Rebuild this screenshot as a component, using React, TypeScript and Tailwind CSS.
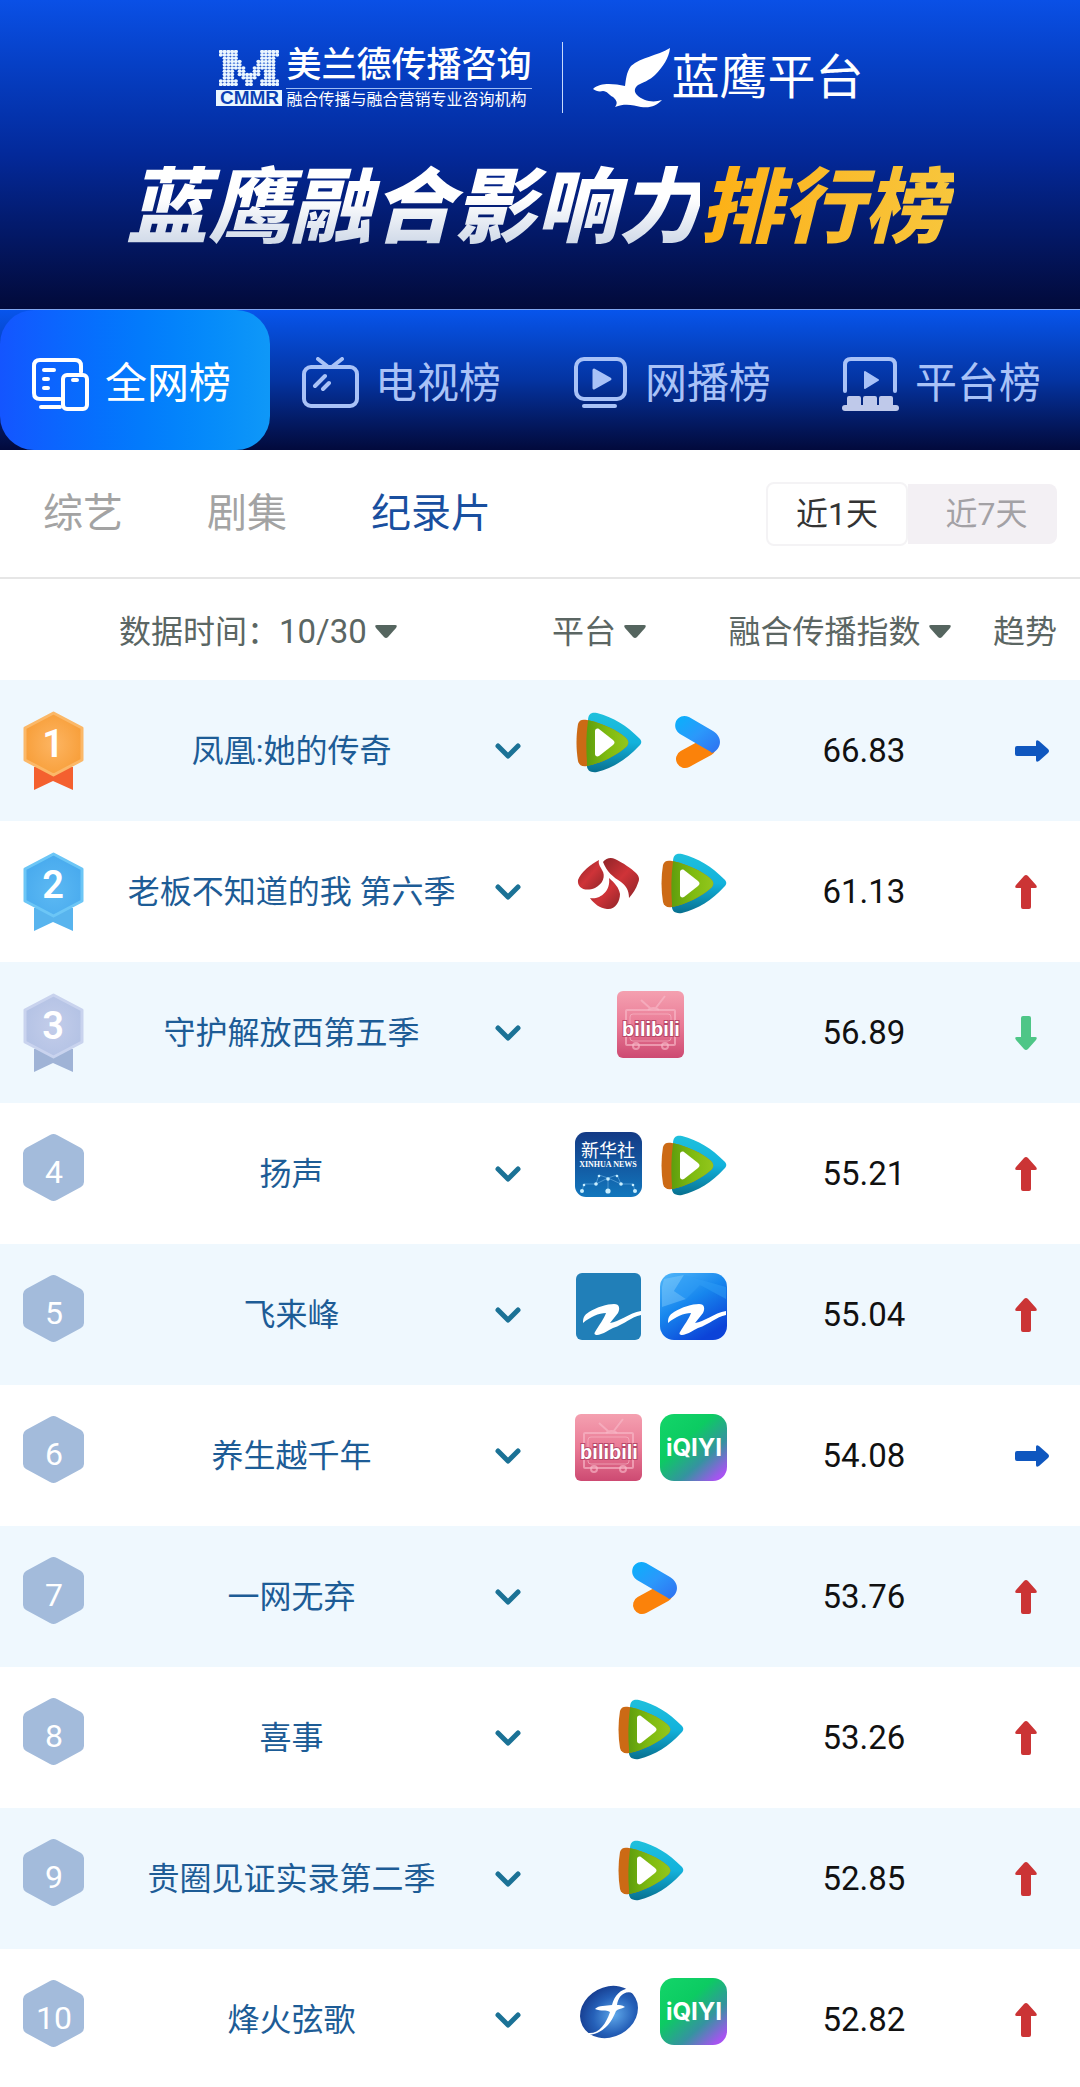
import { useState, type ReactNode } from "react";

type Trend = "up" | "down" | "flat";

interface Row {
  title: string;
  platforms: string[];
  score: string;
  trend: Trend;
}

const rows: Row[] = [
  { title: "凤凰:她的传奇", platforms: ["tencent", "youku"], score: "66.83", trend: "flat" },
  { title: "老板不知道的我 第六季", platforms: ["lychee", "tencent"], score: "61.13", trend: "up" },
  { title: "守护解放西第五季", platforms: ["bilibili"], score: "56.89", trend: "down" },
  { title: "扬声", platforms: ["xinhua", "tencent"], score: "55.21", trend: "up" },
  { title: "飞来峰", platforms: ["zjtv", "zlan"], score: "55.04", trend: "up" },
  { title: "养生越千年", platforms: ["bilibili", "iqiyi"], score: "54.08", trend: "flat" },
  { title: "一网无弃", platforms: ["youku"], score: "53.76", trend: "up" },
  { title: "喜事", platforms: ["tencent"], score: "53.26", trend: "up" },
  { title: "贵圈见证实录第二季", platforms: ["tencent"], score: "52.85", trend: "up" },
  { title: "烽火弦歌", platforms: ["straits", "iqiyi"], score: "52.82", trend: "up" },
];

const mDots = [
  "#####......#####",
  "#####......#####",
  ".####......####.",
  ".#####....#####.",
  ".#####....#####.",
  ".######..######.",
  ".###.##..##.###.",
  ".###.######.###.",
  ".###..####..###.",
  "#####..##..#####",
  "#####..##..#####",
];

// Shared gradients, referenced by id from every icon
function Gradients() {
  return (
    <svg width="0" height="0" className="absolute" aria-hidden="true">
      <defs>
        <linearGradient id="cyan" x1="0" y1="0" x2="0" y2="1">
          <stop offset="0" stopColor="#1fc0dc" />
          <stop offset="0.5" stopColor="#12b2dc" />
          <stop offset="1" stopColor="#08708f" />
        </linearGradient>
        <linearGradient id="green" x1="0" y1="0" x2="1" y2="0">
          <stop offset="0" stopColor="#4f8f0c" />
          <stop offset="0.6" stopColor="#7fbb10" />
          <stop offset="1" stopColor="#93c61c" />
        </linearGradient>
        <linearGradient id="ykBlue" x1="0" y1="0" x2="1" y2="1">
          <stop offset="0" stopColor="#08b2fb" />
          <stop offset="0.5" stopColor="#2b98fb" />
          <stop offset="1" stopColor="#2f6ff0" />
        </linearGradient>
        <linearGradient id="red" x1="0" y1="0" x2="1" y2="1">
          <stop offset="0" stopColor="#8e2428" />
          <stop offset="0.5" stopColor="#cf3338" />
          <stop offset="1" stopColor="#8f2529" />
        </linearGradient>
        <linearGradient id="pink" x1="0" y1="0" x2="0" y2="1">
          <stop offset="0" stopColor="#f4a0b0" />
          <stop offset="0.5" stopColor="#ea7b96" />
          <stop offset="1" stopColor="#cd4a72" />
        </linearGradient>
        <linearGradient id="navy" x1="0" y1="0" x2="0" y2="1">
          <stop offset="0" stopColor="#143a85" />
          <stop offset="1" stopColor="#1277bd" />
        </linearGradient>
        <linearGradient id="sky" x1="0" y1="0" x2="0.6" y2="1">
          <stop offset="0" stopColor="#52b8fa" />
          <stop offset="0.5" stopColor="#1787ee" />
          <stop offset="1" stopColor="#0c43d8" />
        </linearGradient>
        <linearGradient id="iq" x1="0.1" y1="0" x2="1" y2="1">
          <stop offset="0" stopColor="#12d468" />
          <stop offset="0.35" stopColor="#0ccb62" />
          <stop offset="0.65" stopColor="#3593a0" />
          <stop offset="0.9" stopColor="#a455ef" />
          <stop offset="1" stopColor="#b04dfa" />
        </linearGradient>
        <radialGradient id="globe" cx="0.55" cy="0.6" r="0.6">
          <stop offset="0" stopColor="#5fa8ea" />
          <stop offset="0.6" stopColor="#2560b8" />
          <stop offset="1" stopColor="#173f92" />
        </radialGradient>
        <radialGradient id="gold" cx="0.5" cy="0.5" r="0.6">
          <stop offset="0" stopColor="#fdb562" />
          <stop offset="1" stopColor="#f79c35" />
        </radialGradient>
        <radialGradient id="blue" cx="0.5" cy="0.6" r="0.6">
          <stop offset="0" stopColor="#5cb9f3" />
          <stop offset="1" stopColor="#48aaee" />
        </radialGradient>
        <radialGradient id="silver" cx="0.5" cy="0.5" r="0.6">
          <stop offset="0" stopColor="#c3cdea" />
          <stop offset="1" stopColor="#b2c1e4" />
        </radialGradient>
        <clipPath id="cyanShape">
          <path d="M13 12C13 5 16 3 22 4C38 8 52 17 64 29C67 32 67 34 64 37C52 50 38 59 22 63C15 64 11 61 12 54C11 40 11 26 13 12Z" />
        </clipPath>
      </defs>
    </svg>
  );
}

function Tencent() {
  return (
    <>
      <path fill="url(#cyan)" d="M13 12C13 5 16 3 22 4C38 8 52 17 64 29C67 32 67 34 64 37C52 50 38 59 22 63C15 64 11 61 12 54C14 40 14 26 13 12Z" />
      <path fill="#cc6a15" d="M3 15C4 11 7 10 12 11C27 14 42 21 51 29C54 32 54 35 51 38C42 46 27 54 12 57C7 58 4 56 3 52C1 40 1 27 3 15Z" />
      <path fill="url(#green)" clipPath="url(#cyanShape)" d="M3 15C4 11 7 10 12 11C27 14 42 21 51 29C54 32 54 35 51 38C42 46 27 54 12 57C7 58 4 56 3 52C1 40 1 27 3 15Z" />
      <path fill="#fff" d="M20 22C20 20 22 19 24 20L38 31C40 33 40 34 38 36L24 47C22 48 20 47 20 45Z" />
    </>
  );
}

function Youku() {
  return (
    <>
      <path stroke="#fb820a" strokeWidth="18" strokeLinecap="round" d="M25 50L47 38" />
      <path fill="url(#ykBlue)" d="M29 8L53 22C63 28 62 40 52 44C50 42 46 40 44 39L20 25C10 18 17 3 29 8Z" />
    </>
  );
}

function Lychee() {
  return (
    <g fill="url(#red)">
      <path d="M24 10C16 14 6 22 3 30C2 38 10 42 20 38C28 34 31 26 27 20C25 16 23 14 24 10Z" />
      <path d="M28 12C31 8 36 7 40 9C48 13 56 18 61 23C64 26 65 29 63 33C61 39 58 43 54 48C54 40 51 36 46 32C38 27 32 22 28 12Z" />
      <path d="M34 28C40 33 44 38 45 44C45 52 40 60 32 59C25 58 19 54 15 48C24 50 36 42 34 28Z" />
    </g>
  );
}

function Bilibili() {
  return (
    <>
      <rect width="67" height="67" rx="6" fill="url(#pink)" />
      <g fill="none" stroke="#f8b9c8" strokeOpacity="0.65" strokeWidth="2">
        <rect x="9" y="19" width="49" height="35" rx="1" />
        <rect x="13" y="23" width="41" height="27" rx="3" strokeWidth="1" />
        <path d="M24 9L34 18M48 5L38 18M31 19A7 5 0 0 1 42 19" />
        <circle cx="19" cy="55" r="3" />
        <circle cx="48" cy="55" r="3" />
      </g>
      <text x="34" y="45" textAnchor="middle" fontSize="20" fill="#fff" stroke="#b9486a" strokeWidth="2" paintOrder="stroke" className="font-['Liberation_Sans',sans-serif] font-bold">
        bilibili
      </text>
    </>
  );
}

function Xinhua() {
  return (
    <>
      <rect width="67" height="65" rx="11" fill="url(#navy)" />
      <text x="33" y="25" textAnchor="middle" fontSize="18" fill="#fff" className="font-['Noto_Sans_CJK_SC',sans-serif]">
        新华社
      </text>
      <text x="33" y="35" textAnchor="middle" fontSize="8" fill="#fff" className="font-['Liberation_Serif',serif] font-bold">
        XINHUA NEWS
      </text>
      <path stroke="#6fb2e4" strokeWidth="0.6" fill="none" d="M7 59L9 52L21 52L24 43L33 46L42 43L46 52L58 52L60 59M21 52L33 46V59M33 46L46 52" />
      <g fill="#c9efff">
        <circle cx="24" cy="44" r="1.3" />
        <circle cx="42" cy="44" r="1.3" />
        <circle cx="33" cy="47" r="1.8" />
        <circle cx="9" cy="53" r="1.3" />
        <circle cx="21" cy="52" r="1.8" />
        <circle cx="46" cy="52" r="1.8" />
        <circle cx="58" cy="53" r="1.3" />
        <circle cx="7" cy="59" r="2" />
        <circle cx="33" cy="59" r="2.6" />
        <circle cx="60" cy="59" r="2" />
      </g>
    </>
  );
}

const swoosh =
  "M8 50C8 45 9 42 14 39C22 34 32 31 39 31C45 31 45 36 43 40L35 50C44 49 54 40 66 38V42C56 44 50 51 38 55C33 57 30 60 26 61C22 63 18 62 20 59C24 52 29 46 31 40C24 40 15 44 8 50Z";

function Zjtv() {
  return (
    <>
      <rect x="1" width="65" height="67" rx="6" fill="#217fb8" />
      <path fill="#fff" d={swoosh} />
    </>
  );
}

function Zlan() {
  return (
    <>
      <rect width="67" height="67" rx="14" fill="url(#sky)" />
      <path fill="#8fd2fd" fillOpacity="0.4" d="M4 6L24 2L14 18L26 26L2 34V14Z" />
      <path fill="#2f9ef5" fillOpacity="0.5" d="M24 2L66 14V26L40 12L26 26L14 18Z" />
      <path fill="#fff" d={swoosh} />
    </>
  );
}

function Iqiyi() {
  return (
    <>
      <rect width="67" height="67" rx="14" fill="url(#iq)" />
      <text x="34" y="42" textAnchor="middle" fontSize="24" fill="#fff" className="font-['Inter',sans-serif] font-bold">
        iQIYI
      </text>
    </>
  );
}

function Straits() {
  return (
    <>
      <ellipse cx="34" cy="34" rx="30" ry="25" transform="rotate(-28 34 34)" fill="url(#globe)" />
      <path fill="#fff" d="M58 12C50 8 40 15 37 27C31 28 24 27 20 31C26 34 31 31 35 34C31 46 24 56 13 55C8 55 9 53 8 51C11 57 17 58 24 54C34 49 38 40 41 33C43 31 46 31 50 29C47 27 44 27 42 27C43 20 48 12 58 15C61 16 62 18 62 20C62 16 61 13 58 12Z" />
    </>
  );
}

const platformIcons: Record<string, { label: string; art: ReactNode }> = {
  tencent: { label: "腾讯视频", art: <Tencent /> },
  youku: { label: "优酷", art: <Youku /> },
  lychee: { label: "荔枝网", art: <Lychee /> },
  bilibili: { label: "哔哩哔哩", art: <Bilibili /> },
  xinhua: { label: "新华社", art: <Xinhua /> },
  zjtv: { label: "浙江卫视", art: <Zjtv /> },
  zlan: { label: "Z视介", art: <Zlan /> },
  iqiyi: { label: "爱奇艺", art: <Iqiyi /> },
  straits: { label: "海博TV", art: <Straits /> },
};

function Platform({ id }: { id: string }) {
  const { label, art } = platformIcons[id];
  return (
    <svg width="67" height="67" viewBox="0 0 67 67" fill="none" role="img" aria-label={label}>
      {art}
    </svg>
  );
}

const medals = [
  { fill: "url(#gold)", edge: "#fbb868", ribbon: "#f4602f" },
  { fill: "url(#blue)", edge: "#6cc6f6", ribbon: "#58b4ee" },
  { fill: "url(#silver)", edge: "#c9d3ee", ribbon: "#9fb3d6" },
];

function Rank({ rank }: { rank: number }) {
  const medal = medals[rank - 1];
  return (
    <svg width="61" height="80" viewBox="0 0 61 80" className="ml-[23px] block">
      {medal ? (
        <>
          <path fill={medal.ribbon} d="M11 56H50V79L30 70L11 79Z" />
          <path fill={medal.fill} stroke={medal.edge} strokeWidth="3" strokeLinejoin="round" d="M30.5 2L59 17V49L30.5 64L2 49V17Z" />
          <text x="30" y="46" textAnchor="middle" fontSize="38" fill="#fff" className="font-['Roboto',sans-serif] font-semibold">
            {rank}
          </text>
        </>
      ) : (
        <>
          <path fill="#a3bbdb" d="M27 1Q30.5 -1 34 1L58 14Q61 16 61 19V48Q61 51 58 53L34 66Q30.5 68 27 66L3 53Q0 51 0 48V19Q0 16 3 14Z" />
          <text x="31" y="49" textAnchor="middle" fontSize="32" fill="#fff" className="font-['Roboto',sans-serif]">
            {rank}
          </text>
        </>
      )}
    </svg>
  );
}

function TrendArrow({ trend }: { trend: Trend }) {
  if (trend === "flat") {
    return (
      <svg width="34" height="22" viewBox="0 0 34 22" role="img" aria-label="持平">
        <path fill="#0f57bf" d="M2 6H21V2Q21 -1 24 1L33 9Q35 11 33 13L24 21Q21 23 21 20V16H2Q0 16 0 14V8Q0 6 2 6Z" />
      </svg>
    );
  }
  const up = trend === "up";
  return (
    <svg width="22" height="34" viewBox="0 0 22 34" role="img" aria-label={up ? "上升" : "下降"} className={up ? "" : "rotate-180"}>
      <path fill={up ? "#cb3435" : "#4ec687"} d="M6 32V13H2Q-1 13 1 10L9 1Q11 -1 13 1L21 10Q23 13 20 13H16V32Q16 34 14 34H8Q6 34 6 32Z" />
    </svg>
  );
}

function Caret() {
  return (
    <svg width="22" height="13" viewBox="0 0 22 13" aria-hidden="true" className="shrink-0">
      <path fill="#55655f" d="M2 0H20Q23 0 21 3L13 12Q11 14 9 12L1 3Q-1 0 2 0Z" />
    </svg>
  );
}

const tabs = [
  {
    label: "全网榜",
    icon: (
      <>
        <path d="M49 15V9Q49 3 43 3H8Q2 3 2 9V36Q2 42 8 42H28" />
        <rect x="31" y="18" width="24" height="34" rx="4" />
        <path d="M12 13H22M12 22H16M12 31H16M9 50H28M41 23H45" />
      </>
    ),
  },
  {
    label: "电视榜",
    icon: (
      <>
        <rect x="2" y="10" width="53" height="39" rx="7" />
        <path d="M16 2L25 9M40 2L31 9M23 19L13 29M27 26L21 32" />
      </>
    ),
  },
  {
    label: "网播榜",
    icon: (
      <>
        <rect x="4" y="2" width="49" height="40" rx="8" />
        <path d="M12 49H43" />
        <path d="M22 13L38 22L22 31Z" fill="currentColor" strokeWidth="3" />
      </>
    ),
  },
  {
    label: "平台榜",
    icon: (
      <>
        <path d="M3 34V8Q3 2 9 2H47Q53 2 53 8V34" />
        <path d="M23 15L36 23L23 31Z" fill="currentColor" strokeWidth="2" />
        <g stroke="#bfc9ea" fill="#bfc9ea">
          <path d="M7 50V41H17V50ZM23 50V41H33V50ZM39 50V41H49V50Z" />
          <path d="M3 51H54" strokeWidth="6" />
        </g>
      </>
    ),
  },
];

function Banner() {
  return (
    <header className="border-b border-[#7fa6f0] bg-linear-to-b from-[#0a50e6] via-[#03299a] to-[#020a3a] pt-[42px] pb-[60px]">
      <div className="flex items-center justify-center gap-[30px] text-white">
        <div className="flex items-center gap-1">
          <div className="flex w-[66px] flex-col items-center gap-1">
            <svg width="60" height="36" viewBox="0 0 64 44" preserveAspectRatio="none" fill="#eaf6ff" role="img" aria-label="M">
              {mDots.map((line, y) =>
                [...line].map((dot, x) => dot === "#" && <circle key={`${x}-${y}`} cx={x * 4 + 2} cy={y * 4 + 2} r="2.2" />),
              )}
            </svg>
            <span className="w-full bg-[#eaf6ff] text-center font-['Liberation_Sans',sans-serif] text-[19px] leading-4 font-bold text-[#0a3fb4]">
              CMMR
            </span>
          </div>
          <div>
            <div className="border-b border-[#9dbdf5] pb-1 text-[35px] leading-[36px] font-medium">美兰德传播咨询</div>
            <div className="pt-1 text-[16px] leading-[14px]">融合传播与融合营销专业咨询机构</div>
          </div>
        </div>
        <div className="h-[71px] w-px bg-[#c7dafc]" />
        <div className="flex items-center gap-px">
          <svg width="78" height="60" viewBox="0 0 78 60" fill="#fff" aria-hidden="true">
            <path d="M77 0C76 10 70 19 62 27C57 32 49 35 45 37C41 40 41 44 44 47C50 53 60 55 69 52C63 58 58 60 48 59C40 57 32 55 22 59C26 54 22 51 20 49C16 47 14 43 10 43C6 44 3 43 0 41C8 34 21 36 32 38C33 32 33 25 38 18C48 9 64 8 77 0Z" />
          </svg>
          <span className="text-[48px] leading-[60px]">蓝鹰平台</span>
        </div>
      </div>
      <h1 className="mt-[54px] text-center text-[82px] leading-[82px] font-black whitespace-nowrap italic">
        <span className="bg-linear-to-b from-white from-40% to-[#c3cfe2] bg-clip-text text-transparent">蓝鹰融合影响力</span>
        <span className="bg-linear-to-r from-[#fdb012] to-[#f7c63c] bg-clip-text pr-2 text-transparent">排行榜</span>
      </h1>
    </header>
  );
}

export default function App() {
  const [tab, setTab] = useState("全网榜");
  const [genre, setGenre] = useState("纪录片");
  const [range, setRange] = useState("近1天");

  return (
    <div className="min-h-screen bg-white font-['Roboto','Noto_Sans_CJK_SC',sans-serif]">
      <Gradients />
      <Banner />

      {/* Chart tabs */}
      <nav className="grid h-[140px] grid-cols-4 bg-linear-to-b from-[#0755ec] via-[#0434a2] to-[#020a3c]">
        {tabs.map((item) => (
          <button
            key={item.label}
            onClick={() => setTab(item.label)}
            className={
              tab === item.label
                ? "flex items-center gap-4 rounded-[34px] bg-linear-to-r from-[#1455ff] to-[#0f98f8] pt-2 pl-8 text-white"
                : "flex items-center gap-4 pt-2 pl-8 text-[#a9c2f7]"
            }
          >
            <svg width="57" height="55" viewBox="0 0 57 55" fill="none" stroke="currentColor" strokeWidth="4" strokeLinecap="round" strokeLinejoin="round" aria-hidden="true" className="shrink-0">
              {item.icon}
            </svg>
            <span className="text-[42px] leading-[60px]">{item.label}</span>
          </button>
        ))}
      </nav>

      {/* Genre and date range */}
      <div className="flex items-center justify-between border-b-2 border-[#e6e6e6] pt-8 pr-[23px] pb-[31px] pl-[43px]">
        <div className="flex gap-[84px] text-[40px] leading-[60px]">
          {["综艺", "剧集", "纪录片"].map((name) => (
            <button key={name} onClick={() => setGenre(name)} className={genre === name ? "text-[#194f9f]" : "text-[#a3a3a3]"}>
              {name}
            </button>
          ))}
        </div>
        <div className="flex items-center text-[32px]">
          {["近1天", "近7天"].map((name) => (
            <button
              key={name}
              onClick={() => setRange(name)}
              className={
                range === name
                  ? "h-16 w-[142px] rounded-lg border-2 border-[#f4f3f5] bg-white text-[#333]"
                  : "h-[60px] w-[149px] rounded-r-lg bg-[#f3f0f4] pl-2 text-[#a3a1a5]"
              }
            >
              {name}
            </button>
          ))}
        </div>
      </div>

      <table className="w-full table-fixed">
        <colgroup>
          <col className="w-[10%]" />
          <col className="w-[34%]" />
          <col className="w-[6%]" />
          <col className="w-[20.5%]" />
          <col className="w-[19%]" />
          <col className="w-[10.5%]" />
        </colgroup>
        <thead className="text-[32px] text-[#5b6663]">
          <tr className="h-[101px]">
            <th />
            <th colSpan={2} className="pt-1 pl-[11px] font-normal">
              <div className="flex items-center">
                <label htmlFor="date">数据时间：</label>
                <select id="date" className="mr-2 appearance-none bg-transparent text-[33px]">
                  <option>10/30</option>
                </select>
                <Caret />
              </div>
            </th>
            <th className="pt-1 pl-3 font-normal">
              <button className="flex items-center gap-2">
                平台
                <Caret />
              </button>
            </th>
            <th className="pt-1 pr-4 font-normal">
              <div className="flex justify-end">
                <button className="flex shrink-0 items-center gap-2 whitespace-nowrap">
                  融合传播指数
                  <Caret />
                </button>
              </div>
            </th>
            <th className="pt-1 pr-[23px] text-right font-normal">趋势</th>
          </tr>
        </thead>
        <tbody>
          {rows.map((row, i) => (
            <tr key={row.title} className="h-[141px] odd:bg-[#eff8fe]">
              <td>
                <Rank rank={i + 1} />
              </td>
              <td className="text-center text-[32px] whitespace-nowrap text-[#1d5c96]">{row.title}</td>
              <td>
                <button aria-label="展开" className="mx-auto block">
                  <svg width="26" height="16" viewBox="0 0 26 16" fill="none" stroke="#1b7296" strokeWidth="5" strokeLinecap="round" strokeLinejoin="round">
                    <path d="M3 3L13 13L23 3" />
                  </svg>
                </button>
              </td>
              <td className="pb-4">
                <div className="flex justify-center gap-[18px]">
                  {row.platforms.map((id) => (
                    <Platform key={id} id={id} />
                  ))}
                </div>
              </td>
              <td className="text-center text-[33px] text-[#111]">{row.score}</td>
              <td className="pl-12">
                <TrendArrow trend={row.trend} />
              </td>
            </tr>
          ))}
        </tbody>
      </table>
    </div>
  );
}
